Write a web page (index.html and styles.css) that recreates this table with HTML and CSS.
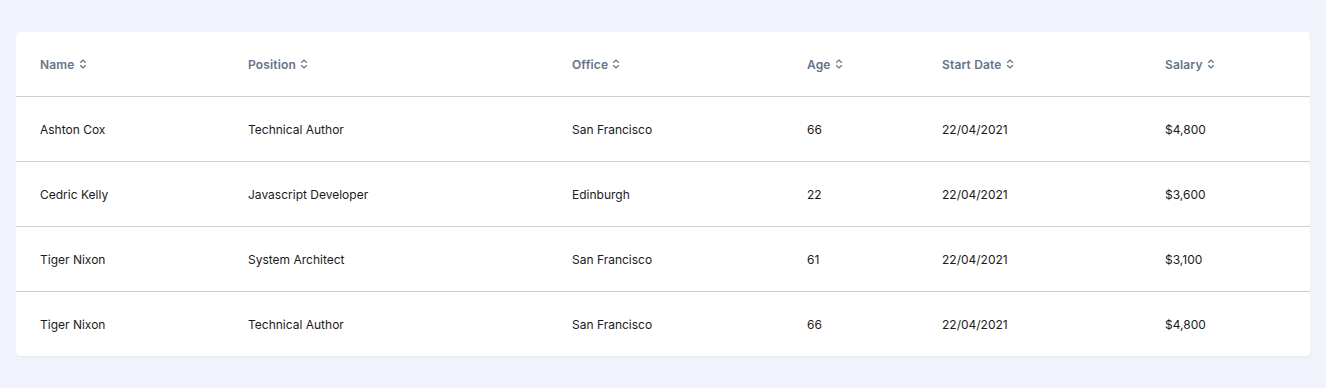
FILE: index.html
```html
<!DOCTYPE html>
<html>
<head>
<meta charset="utf-8">
<link rel="stylesheet" href="styles.css">
</head>
<body>
<div class="card">
  <table class="tbl">
    <colgroup>
      <col class="c1"><col class="c2"><col class="c3"><col class="c4"><col class="c5"><col class="c6">
    </colgroup>
    <thead>
      <tr>
        <th><span class="h">Name<svg class="sort" viewBox="0 0 8 12" width="8" height="12"><path d="M1.5 4.5 L4 2 L6.5 4.5 M1.5 7.5 L4 10 L6.5 7.5"/></svg></span></th>
        <th><span class="h">Position<svg class="sort" viewBox="0 0 8 12" width="8" height="12"><path d="M1.5 4.5 L4 2 L6.5 4.5 M1.5 7.5 L4 10 L6.5 7.5"/></svg></span></th>
        <th><span class="h">Office<svg class="sort" viewBox="0 0 8 12" width="8" height="12"><path d="M1.5 4.5 L4 2 L6.5 4.5 M1.5 7.5 L4 10 L6.5 7.5"/></svg></span></th>
        <th><span class="h">Age<svg class="sort" viewBox="0 0 8 12" width="8" height="12"><path d="M1.5 4.5 L4 2 L6.5 4.5 M1.5 7.5 L4 10 L6.5 7.5"/></svg></span></th>
        <th><span class="h">Start Date<svg class="sort" viewBox="0 0 8 12" width="8" height="12"><path d="M1.5 4.5 L4 2 L6.5 4.5 M1.5 7.5 L4 10 L6.5 7.5"/></svg></span></th>
        <th><span class="h">Salary<svg class="sort" viewBox="0 0 8 12" width="8" height="12"><path d="M1.5 4.5 L4 2 L6.5 4.5 M1.5 7.5 L4 10 L6.5 7.5"/></svg></span></th>
      </tr>
    </thead>
    <tbody>
      <tr><td>Ashton Cox</td><td>Technical Author</td><td>San Francisco</td><td>66</td><td>22/04/2021</td><td>$4,800</td></tr>
      <tr><td>Cedric Kelly</td><td>Javascript Developer</td><td>Edinburgh</td><td>22</td><td>22/04/2021</td><td>$3,600</td></tr>
      <tr><td>Tiger Nixon</td><td>System Architect</td><td>San Francisco</td><td>61</td><td>22/04/2021</td><td>$3,100</td></tr>
      <tr><td>Tiger Nixon</td><td>Technical Author</td><td>San Francisco</td><td>66</td><td>22/04/2021</td><td>$4,800</td></tr>
    </tbody>
  </table>
</div>
</body>
</html>
```
FILE: styles.css
```css
html, body {
  margin: 0;
  padding: 0;
  background: #f0f3fb;
}
body {
  padding: 32px 16px;
  font-family: Inter, "Liberation Sans", sans-serif;
  font-size: 12px;
  color: #1a1a1a;
}
.card {
  background: #ffffff;
  border-radius: 4px;
  box-shadow: 0 1px 2px rgba(30, 40, 80, 0.06);
}
.tbl {
  width: 100%;
  border-collapse: collapse;
  table-layout: fixed;
}
.c1 { width: 232px; }
.c2 { width: 324px; }
.c3 { width: 235px; }
.c4 { width: 135px; }
.c5 { width: 223px; }
.c6 { width: auto; }
th, td {
  padding: 0;
  text-align: left;
  vertical-align: middle;
  border-bottom: 1px solid #cfcfd4;
}
th:first-child, td:first-child {
  padding-left: 24px;
}
th:last-child, td:last-child {
  padding-right: 24px;
}
th {
  height: 64px;
  font-weight: 600;
  letter-spacing: 0.15px;
  color: #64748b;
}
.h {
  display: inline-flex;
  align-items: center;
  gap: 4px;
}
.sort {
  fill: none;
  stroke: #64748b;
  stroke-width: 1.1;
  stroke-linecap: round;
  stroke-linejoin: round;
}
td {
  height: 64px;
  font-weight: 400;
}
tbody tr:last-child td {
  border-bottom: none;
}
```
